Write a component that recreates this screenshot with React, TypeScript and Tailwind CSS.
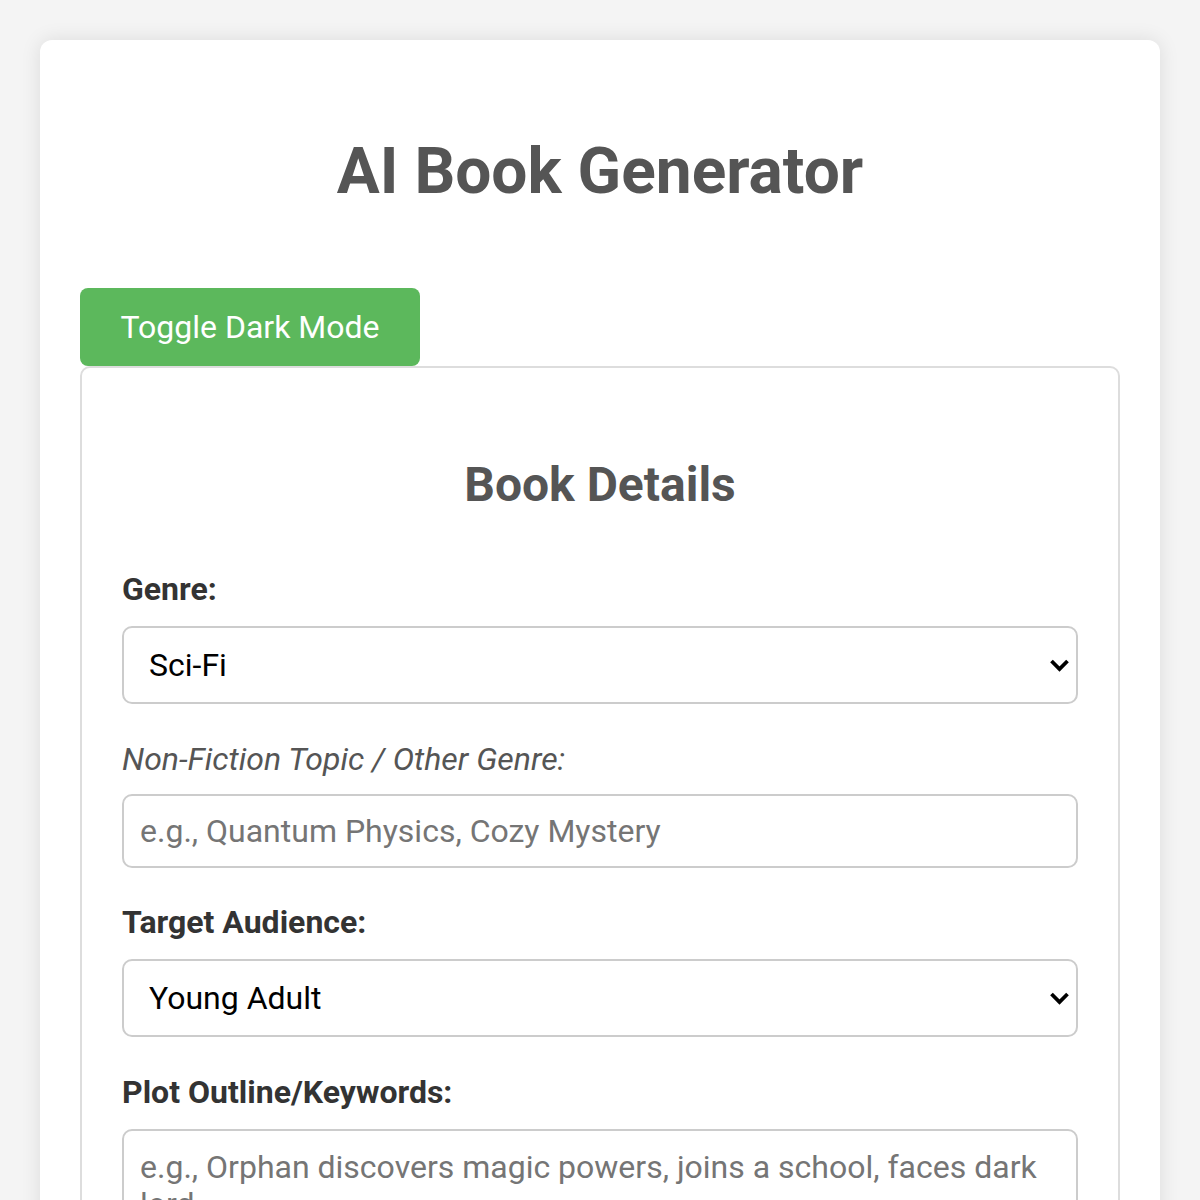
import React from "react";

function Chevron() {
  return (
    <svg
      className="pointer-events-none absolute right-[8px] top-1/2 -translate-y-1/2"
      width="21"
      height="14"
      viewBox="0 0 21 14"
      fill="none"
    >
      <polyline points="2.5,3 10.5,11 18.5,3" stroke="#000" strokeWidth="3.8" strokeLinejoin="miter" />
    </svg>
  );
}

function SelectField({ label, value, options }: { label: string; value: string; options: string[] }) {
  return (
    <div className="flex flex-col">
      <label className="block text-[32px] leading-[37px] font-bold text-[#333] mb-[18px]">{label}</label>
      <div className="relative mb-[37px]">
        <select
          defaultValue={value}
          className="block w-full h-[78px] appearance-none rounded-[10px] border-2 border-[#ccc] bg-white pl-[25px] pr-[40px] text-[32px] leading-[37px] text-black outline-none"
        >
          {options.map((o) => (
            <option key={o} value={o}>
              {o}
            </option>
          ))}
        </select>
        <Chevron />
      </div>
    </div>
  );
}

export default function App() {
  return (
    <div className="min-h-screen bg-[#f4f4f4] px-[40px] pt-[40px] pb-[40px] font-['Roboto',_'Liberation_Sans',_sans-serif]">
      <div className="w-[1120px] rounded-[12px] bg-white p-[40px] shadow-[0_0_20px_rgba(0,0,0,0.1)]">
        <h1 className="mt-[54px] mb-[79px] text-center text-[64px] leading-[75px] font-bold text-[#555]">
          AI Book Generator
        </h1>
        <button className="flex h-[78px] w-[340px] items-center justify-center rounded-[8px] bg-[#5cb85c] text-[32px] leading-[37px] text-white">
          Toggle Dark Mode
        </button>
        <div className="rounded-[10px] border-2 border-[#ddd] bg-white px-[40px] pt-[40px] pb-[40px]">
          <h2 className="mt-[49px] mb-[58px] text-center text-[48px] leading-[56px] font-bold text-[#555]">
            Book Details
          </h2>
          <SelectField
            label="Genre:"
            value="Sci-Fi"
            options={["Fantasy", "Sci-Fi", "Mystery", "Romance", "Thriller", "Non-Fiction", "Other"]}
          />
          <div className="flex flex-col">
            <label className="block text-[32px] leading-[37px] italic text-[#555] mb-[16px]">
              Non-Fiction Topic / Other Genre:
            </label>
            <input
              type="text"
              placeholder="e.g., Quantum Physics, Cozy Mystery"
              className="mb-[36px] block h-[74px] w-full rounded-[10px] border-2 border-[#ccc] bg-white px-[16px] text-[32px] leading-[37px] text-black outline-none placeholder:text-[#757575]"
            />
          </div>
          <SelectField
            label="Target Audience:"
            value="Young Adult"
            options={["Children", "Middle Grade", "Young Adult", "Adult"]}
          />
          <div className="flex flex-col">
            <label className="block text-[32px] leading-[37px] font-bold text-[#333] mb-[18px]">
              Plot Outline/Keywords:
            </label>
            <textarea
              rows={5}
              placeholder="e.g., Orphan discovers magic powers, joins a school, faces dark lord"
              className="block w-full resize-y rounded-[10px] border-2 border-[#ccc] bg-white px-[16px] pt-[18px] pb-[16px] text-[32px] leading-[37px] text-black outline-none placeholder:text-[#757575]"
            />
          </div>
        </div>
      </div>
    </div>
  );
}
